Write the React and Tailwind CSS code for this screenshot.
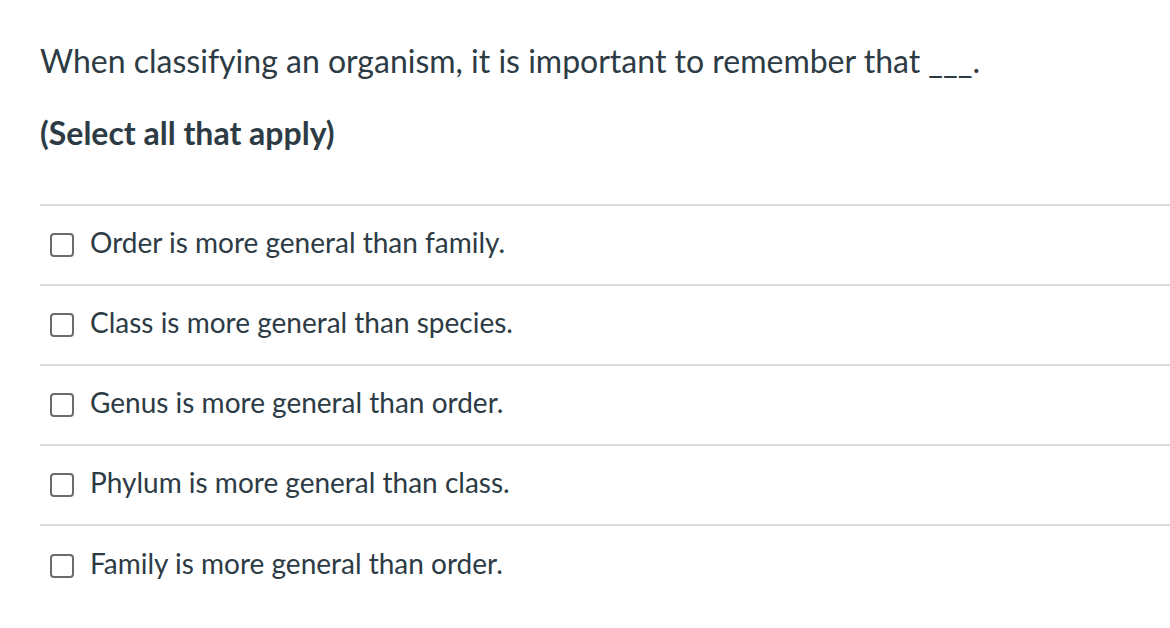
import React from "react";

const options = [
  "Order is more general than family.",
  "Class is more general than species.",
  "Genus is more general than order.",
  "Phylum is more general than class.",
  "Family is more general than order.",
];

export default function App() {
  return (
    <div className="w-[1170px] h-[628px] bg-white overflow-hidden text-[#2d3b45]" style={{ fontFamily: "Lato, 'Open Sans', sans-serif" }}>
      <div className="pl-[40px] pt-[40px]">
        <p className="text-[32px] leading-[42px]">When classifying an organism, it is important to remember that ___.</p>
        <p className="mt-[30px] text-[32px] leading-[42px] font-bold">(Select all that apply)</p>
        <div className="mt-[50px] border-t-2 border-[#dcdcdc]">
          {options.map((o, i) => (
            <div key={i} className={`flex items-center h-[80px] pl-[10px] ${i < options.length - 1 ? "border-b-2 border-[#dcdcdc]" : ""}`}>
              <span className="w-[24px] h-[24px] rounded-[4px] border-2 border-[#6b6b6b] shrink-0" />
              <span className="ml-[16px] text-[28px] leading-[40px] pb-[6px]">{o}</span>
            </div>
          ))}
        </div>
      </div>
    </div>
  );
}
